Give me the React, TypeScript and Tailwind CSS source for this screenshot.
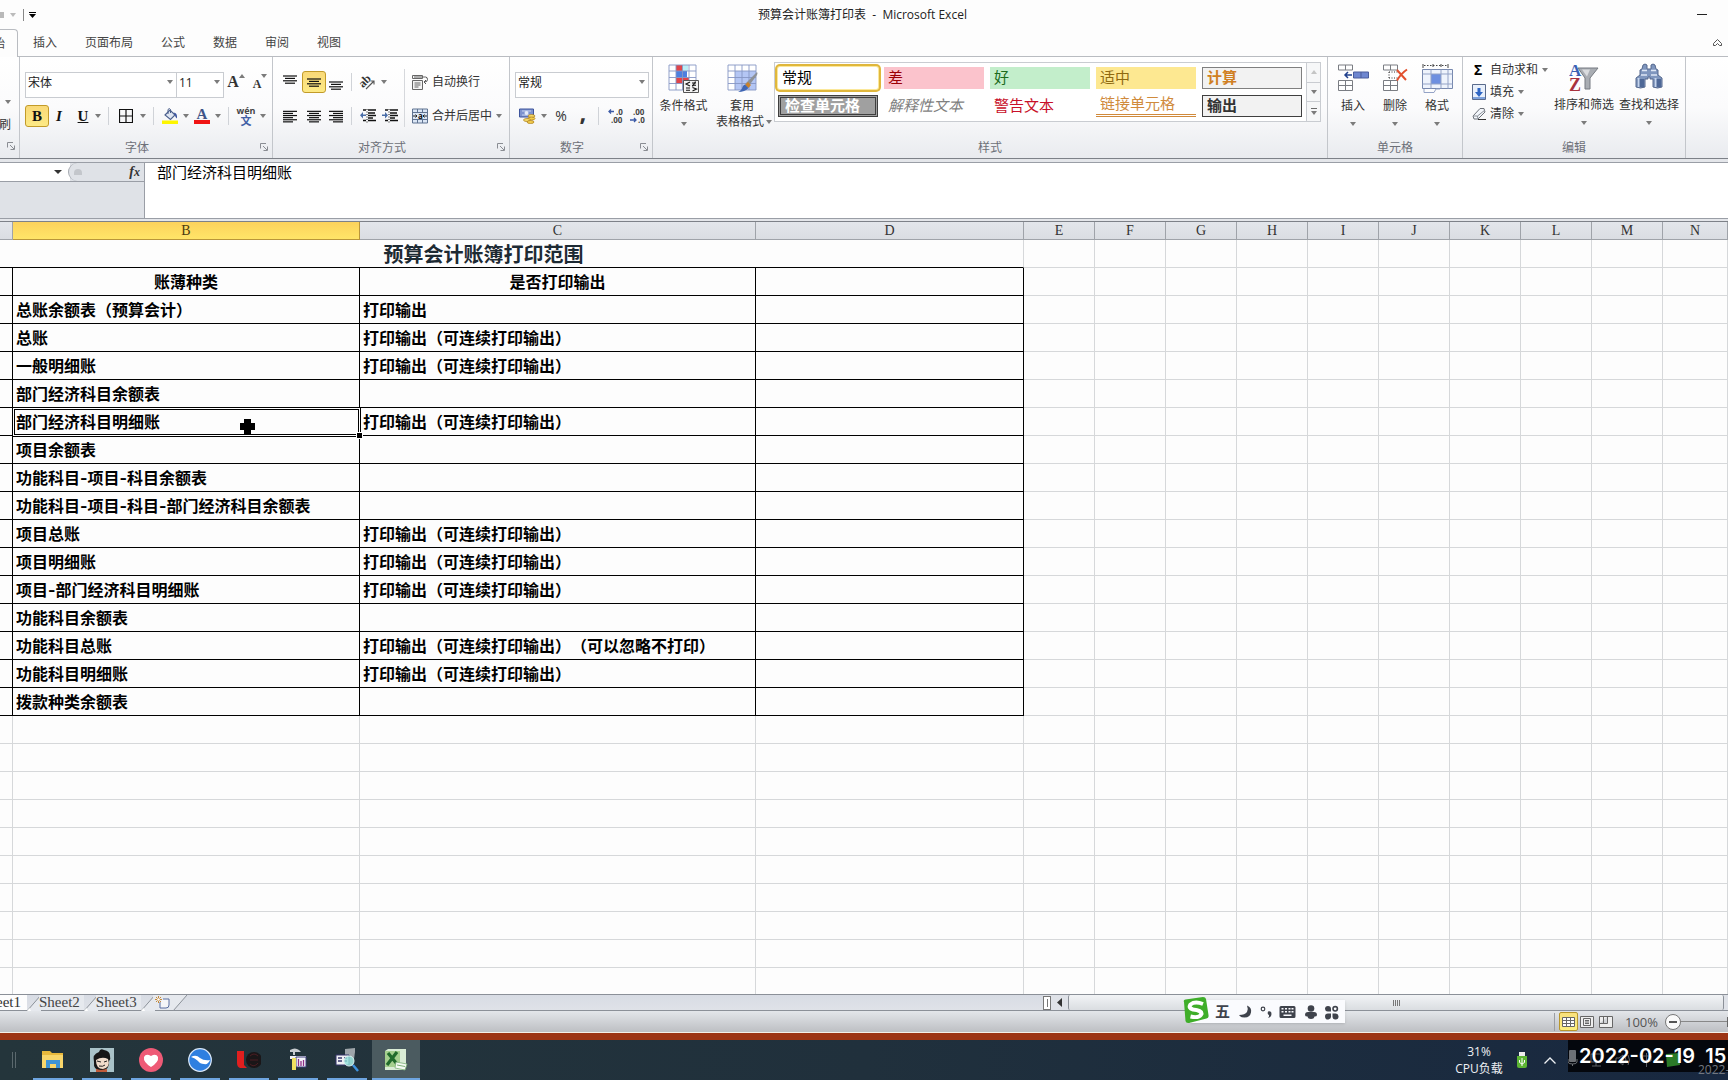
import type { ReactNode } from "react";
import clsx from "clsx";

const TABS = ["插入", "页面布局", "公式", "数据", "审阅", "视图"];

const COLUMNS = ["E", "F", "G", "H", "I", "J", "K", "L", "M", "N"];

const PRINT = "打印输出（可连续打印输出）";

const ROWS: [string, string][] = [
  ["总账余额表（预算会计）", "打印输出"],
  ["总账", PRINT],
  ["一般明细账", PRINT],
  ["部门经济科目余额表", ""],
  ["部门经济科目明细账", PRINT],
  ["项目余额表", ""],
  ["功能科目-项目-科目余额表", ""],
  ["功能科目-项目-科目-部门经济科目余额表", ""],
  ["项目总账", PRINT],
  ["项目明细账", PRINT],
  ["项目-部门经济科目明细账", PRINT],
  ["功能科目余额表", ""],
  ["功能科目总账", "打印输出（可连续打印输出）（可以忽略不打印）"],
  ["功能科目明细账", PRINT],
  ["拨款种类余额表", ""],
];

const SELECTED_ROW = 4;
const EMPTY_ROWS = 12;

const STYLES = [
  {
    name: "常规",
    cls: "bg-white text-black rounded-xs shadow-[0_0_0_1px_#fbe89a,0_0_0_3px_#e0b73c]",
  },
  { name: "差", cls: "bg-[#fbc3cc] text-[#9c0006]" },
  { name: "好", cls: "bg-[#c3eecb] text-[#1c6b1c]" },
  { name: "适中", cls: "bg-[#fde891] text-[#8f6a10]" },
  {
    name: "计算",
    cls: "bg-[#f2f2f2] text-[#d07f22] font-bold border border-[#7f7f7f]",
  },
  {
    name: "检查单元格",
    cls: "bg-[#a0a0a0] text-white font-bold border-3 border-double border-[#3f3f3f]",
  },
  { name: "解释性文本", cls: "text-[#7f7f7f] italic" },
  { name: "警告文本", cls: "text-[#c8102a]" },
  {
    name: "链接单元格",
    cls: "text-[#d08a3c] border-b-3 border-double border-[#d08a3c]",
  },
  {
    name: "输出",
    cls: "bg-[#f2f2f2] text-[#333] font-bold border border-[#3f3f3f]",
  },
];

const Caret = ({ className }: { className?: string }) => (
  <svg
    viewBox="0 0 6 4"
    className={clsx("w-1.5 h-1 shrink-0 fill-[#7b7b7b]", className)}
  >
    <path d="M0 0h6L3 4z" />
  </svg>
);

const Drop = ({ label }: { label: string }) => (
  <button
    aria-label={label}
    className="w-2.5 h-full flex items-center justify-center shrink-0"
  >
    <Caret />
  </button>
);

const Sep = () => <span className="w-px h-[18px] mx-[5px] bg-[#d0d3d8]" />;

const Tool = ({
  label,
  className,
  active,
  children,
}: {
  label: string;
  className?: string;
  active?: boolean;
  children: ReactNode;
}) => (
  <button
    aria-label={label}
    className={clsx(
      "h-[22px] flex items-center justify-center shrink-0",
      active &&
        "rounded-[3px] border border-[#c29b29] bg-linear-to-b from-[#f9d978] to-[#fdea85]",
      className,
    )}
  >
    {children}
  </button>
);

const Combo = ({
  label,
  value,
  className,
}: {
  label: string;
  value: string;
  className?: string;
}) => (
  <div className={clsx("relative h-[26px] shrink-0", className)}>
    <select
      aria-label={label}
      defaultValue={value}
      className="appearance-none w-full h-full border border-[#c9ccd1] bg-white pl-0.5 pb-1 text-xs text-[#222]"
    >
      <option>{value}</option>
    </select>
    <Caret className="absolute right-1 top-[11px] pointer-events-none" />
  </div>
);

const Group = ({
  title,
  className,
  launcher,
  children,
}: {
  title: string;
  className: string;
  launcher?: boolean;
  children: ReactNode;
}) => (
  <section
    className={clsx(
      "flex flex-col shrink-0 border-r border-[#c3c6cb]",
      className,
    )}
  >
    <div className="flex-1">{children}</div>
    <div
      className={clsx(
        "relative h-[21px] flex items-center justify-center text-xs text-[#6d7078]",
        launcher && "pr-[18px]",
      )}
    >
      {title}
      {launcher && (
        <button aria-label="更多" className="absolute right-1 top-1.5">
          <svg
            viewBox="0 0 8 8"
            className="w-2 h-2 fill-none stroke-[#8a8d93]"
            strokeWidth="1"
          >
            <path d="M.5 5.500V.5H6M3 3l4 4M7.500 3.500v4h-4" />
          </svg>
        </button>
      )}
    </div>
  </section>
);

// Paragraph lines of alternating length, used by every alignment icon
const Lines = ({
  count,
  pitch,
  align,
  className,
}: {
  count: number;
  pitch: number;
  align: "start" | "middle" | "end";
  className?: string;
}) => (
  <svg
    viewBox="0 0 14 13"
    className={clsx("w-3.5 h-[13px] fill-[#111]", className)}
  >
    {Array.from({ length: count }, (_, i) => {
      const w = i % 2 ? 10 : 14;
      const x = align === "start" ? 0 : align === "end" ? 14 - w : (14 - w) / 2;
      return (
        <rect
          key={i}
          x={x}
          y={(13 - (count - 1) * pitch - 1) / 2 + i * pitch}
          width={w}
          height="1.200"
        />
      );
    })}
  </svg>
);

const IndentIcon = ({ flip }: { flip?: boolean }) => (
  <svg viewBox="0 0 16 14" className="w-4 h-3.5">
    <path
      d="M3 1h3M8 1h8M8 4h7M8 6.500h8M8 9h5M3 11.500h3M8 11.500h8"
      stroke="#111"
      strokeWidth="1.500"
    />
    <path d="M7 0v14" stroke="#111" strokeDasharray="1 1.500" />
    <path
      d={flip ? "M0 5.500h3V3l3 3.300-3 3.300V7H0z" : "M6 5.500H3V3L0 6.300l3 3.300V7h3z"}
      fill="#4a6ea8"
    />
  </svg>
);

const BorderIcon = () => (
  <svg viewBox="0 0 14 14" className="w-3.5 h-3.5">
    <path
      d="M.5 .5h13v13H.5zM7 .5v13M.5 7h13"
      fill="none"
      stroke="#111"
      strokeWidth="1.200"
    />
  </svg>
);

const FillIcon = () => (
  <svg viewBox="0 0 16 16" className="w-4 h-4">
    <path
      d="M3 7l5-5 5 5-4.500 4.500z"
      fill="#dfe6f2"
      stroke="#4a5f8c"
      strokeWidth="1.100"
    />
    <path d="M6 6V1.500Q7.500-.5 8.500 1.500V5" fill="none" stroke="#4a5f8c" />
    <path d="M11.500 4.500q4 0 3.500 6-2-1-2-3.500z" fill="#3a52a0" />
    <rect y="12.500" width="16" height="3.500" fill="#fdf500" />
  </svg>
);

const OrientIcon = () => (
  <svg viewBox="0 0 18 16" className="w-[18px] h-4">
    <text
      x="0"
      y="11"
      fontSize="12"
      fontWeight="700"
      fontFamily="Liberation Serif, serif"
      fill="#333"
      transform="rotate(-45 6 8)"
    >
      ab
    </text>
    <path
      d="M7 15l8-8M11.500 7H15v3.500"
      fill="none"
      stroke="#555"
      strokeWidth="1.100"
    />
  </svg>
);

const WrapIcon = () => (
  <svg viewBox="0 0 16 16" className="w-4 h-4 fill-none stroke-[#666]">
    <path d="M.5 1.500h10v3H.5zM.5 6.500h10v9H.5z" fill="#f4f4f4" />
    <path d="M2 3h11.500M2.500 9h6M2.500 11h6M2.500 13h4" />
    <path d="M13.500 3q2 0 2 2.500T12.500 8M14 6l-2 2 2 2" stroke="#555" />
  </svg>
);

const MergeIcon = () => (
  <svg viewBox="0 0 16 16" className="w-4 h-4">
    <path
      d="M.5 1h15v14H.5zM.5 4.500h15M.5 11.500h15M5.500 1v3.500M10.500 1v3.500M5.500 11.500V15M10.500 11.500V15"
      fill="#dbe6f5"
      stroke="#5f7391"
    />
    <path d="M1 8h4M3.500 6.500L5 8 3.500 9.500M15 8h-4M12.500 6.500L11 8l1.500 1.500" fill="none" stroke="#222" />
    <text x="6" y="10.500" fontSize="8" fontWeight="700" fill="#111">
      a
    </text>
  </svg>
);

const MoneyIcon = () => (
  <svg viewBox="0 0 17 16" className="w-[17px] h-4">
    <path d="M.5 1h14v8H.5z" fill="#7d92cf" stroke="#3e549c" />
    <path d="M3 3h9M3 7h9" stroke="#c9d4f1" />
    <circle cx="7.500" cy="5" r="2" fill="#e6ecfa" />
    <ellipse cx="12.500" cy="8" rx="3.500" ry="1.500" fill="#f7dc6a" stroke="#a7791a" strokeWidth=".7" />
    <ellipse cx="12.500" cy="10.500" rx="3.500" ry="1.500" fill="#f3cd4c" stroke="#a7791a" strokeWidth=".7" />
    <ellipse cx="8" cy="12" rx="3.500" ry="1.500" fill="#f7dc6a" stroke="#a7791a" strokeWidth=".7" />
    <ellipse cx="11.500" cy="14" rx="3.500" ry="1.500" fill="#f3cd4c" stroke="#a7791a" strokeWidth=".7" />
  </svg>
);

const DecimalIcon = ({ less }: { less?: boolean }) => (
  <svg viewBox="0 0 16 16" className="w-4 h-4" fontSize="8" fontWeight="700">
    <text x={less ? 3 : 8} y="7" fill="#444">
      {less ? ".00" : ".0"}
    </text>
    <text x={less ? 8 : 3} y="15" fill="#444">
      {less ? ".0" : ".00"}
    </text>
    <path
      d={less ? "M0 12h6M4 10l2 2-2 2" : "M6 3.500H1M3 1.500l-2 2 2 2"}
      fill="none"
      stroke="#3c5aa6"
      strokeWidth="1.300"
    />
  </svg>
);

const CondIcon = () => (
  <svg viewBox="0 0 31 29" className="w-[31px] h-[29px]">
    <rect x="1" y="1" width="27" height="25" fill="#fff" />
    <path d="M8 1h6v6H8zM8 13.500h13v6H8z" fill="#e0454a" />
    <path d="M8 7h11v6.500H8z" fill="#4c7fe0" />
    <path d="M14 1h6v6h-6z" fill="#bdeef5" />
    <path
      d="M1 1h27v25H1zM1 7h27M1 13.500h27M1 19.500h27M8 1v25M14.500 1v25M21 1v25"
      fill="none"
      stroke="#8796c4"
      strokeWidth=".9"
    />
    <path d="M15.500 16.500h15v12h-15z" fill="#f4f4f4" stroke="#555" />
    <path
      d="M22 18l-4 2 4 2M18 24h4M18 26.200h4M24 19h4M24 21.200h4M27.500 17.500l-3 5M24.500 23.500l4 1.500-4 2"
      fill="none"
      stroke="#111"
      strokeWidth="1.100"
    />
  </svg>
);

const TableFmtIcon = () => (
  <svg viewBox="0 0 31 29" className="w-[31px] h-[29px]">
    <rect x="1" y="1" width="28" height="25" fill="#fff" />
    <path d="M8 7h21v19H8z" fill="#b4c6f4" />
    <path
      d="M1 1h28v25H1zM1 7h28M1 13.500h28M1 19.500h28M8 1v25M15 1v25M22 1v25"
      fill="none"
      stroke="#8796c4"
      strokeWidth=".9"
    />
    <path d="M30 8q1 1 0 3l-9 12-3-3L28 10z" fill="#8d9197" />
    <path d="M21 18l3 3-2.500 3-3.500-3z" fill="#c9822c" />
    <path d="M18 20.500l3.500 3.500Q18 28 11 28q4-2 4.500-5 .5-2 2.500-2.500z" fill="#3f66b4" />
  </svg>
);

const InsertIcon = () => (
  <svg viewBox="0 0 31 27" className="w-[31px] h-[27px]">
    <path
      d="M.5 1h14v5H.5zM7.500 1v5M.5 16.500h14v10H.5zM7.500 16.500v10M.5 21.500h14"
      fill="#fff"
      stroke="#7a7d83"
    />
    <path d="M15.500 8h15v6h-15z" fill="#6e86d0" stroke="#4a5c9c" />
    <path d="M23 8v6" stroke="#4a5c9c" />
    <path d="M14 11H7M10 8l-3 3 3 3" fill="none" stroke="#1f3f8c" strokeWidth="1.500" />
  </svg>
);

const DeleteIcon = () => (
  <svg viewBox="0 0 25 27" className="w-[25px] h-[27px]">
    <path
      d="M.5 1h14v5H.5zM7.500 1v5M.5 16.500h14v10H.5zM7.500 16.500v10M.5 21.500h14"
      fill="#fff"
      stroke="#7a7d83"
    />
    <path d="M6 8h9M6 14h9M6 8v6" fill="none" stroke="#333" strokeDasharray="1 1.500" />
    <path d="M14 6l9 10M24 5.500q-6 4-10 11" fill="none" stroke="#e2502e" strokeWidth="2" />
  </svg>
);

const FormatIcon = () => (
  <svg viewBox="0 0 31 30" className="w-[31px] h-[30px]">
    <path d="M1 0v4M26 0v4M11 0v3M19 0v3" stroke="#444" />
    <path d="M2 1.500h24" stroke="#444" strokeDasharray="1.500 1.500" />
    <path d="M.5 5.500h30v19H.5z" fill="#eef3fc" stroke="#7788ae" />
    <path d="M9 10h10v10H9z" fill="#6d8fe0" />
    <path
      d="M.5 10h30M.5 20h30M9 5.500v19M19 5.500v19M26 5.500v19M2 25v3.500h10l2-3.500h4"
      fill="none"
      stroke="#94a3c6"
    />
  </svg>
);

const SortIcon = () => (
  <svg viewBox="0 0 30 30" className="w-[30px] h-[30px]">
    <path d="M9 5h20l-8 10v11h-5V15z" fill="#a9adb3" stroke="#777b82" />
    <path d="M13 6.500h8l-3 7z" fill="#d9dbde" />
    <text x="0" y="13" fontSize="17" fontWeight="700" fontFamily="Liberation Serif, serif" fill="#3b62b5">
      A
    </text>
    <text x="0" y="28" fontSize="18" fontWeight="700" fontFamily="Liberation Serif, serif" fill="#a8323e">
      Z
    </text>
  </svg>
);

const FindIcon = () => (
  <svg viewBox="0 0 28 27" className="w-7 h-[27px]">
    <path
      d="M8 2q2-2 4 0v4h4V2q2-2 4 0l1 4 2 1v5l4 3v9q-4.500 2-9 0v-8h-3v-2h-2v2h-3v8q-4.500 2-9 0v-9l4-3V7l2-1z"
      fill="#7f96be"
      stroke="#56698e"
    />
    <path d="M2 16h7v8H2zM19 16h7v8h-7z" fill="#4e6897" />
    <path d="M3.500 15v9M20.500 15v9" stroke="#c6d5ee" strokeWidth="2" />
    <path d="M7 7.500h5M16 7.500h5M6 12h6M16 12h6" stroke="#dfe8f6" strokeWidth="1.500" />
  </svg>
);

const FillDownIcon = () => (
  <svg viewBox="0 0 14 16" className="w-3.5 h-4">
    <path d="M.5 .5h13v15H.5z" fill="#e9f0fb" stroke="#5a6b8c" />
    <path d="M1 13h12v2H1z" fill="#7ea2dc" />
    <path d="M5.500 4h3v4H11l-4 5-4-5h2.500z" fill="#2f66c4" />
  </svg>
);

const EraserIcon = () => (
  <svg viewBox="0 0 14 14" className="w-3.5 h-3.5">
    <path d="M1 9l7-7.500h4L13 5l-7 7H2z" fill="#f3f6fb" stroke="#6b7078" />
    <path d="M1 9h4.500L13 3M5.500 9L6 12" fill="none" stroke="#8a9098" />
    <path d="M6 12.500h8" stroke="#333" />
  </svg>
);

const BigTool = ({
  icon,
  label,
  className,
}: {
  icon: ReactNode;
  label: string;
  className?: string;
}) => (
  <button
    className={clsx(
      "flex flex-col items-center shrink-0 text-xs leading-4 text-[#333]",
      className,
    )}
  >
    <span className="h-[30px] flex items-start mb-1">{icon}</span>
    {label}
    <Caret className="mt-2" />
  </button>
);

const EditTool = ({ icon, label }: { icon: ReactNode; label: string }) => (
  <button className="h-[22px] flex items-center text-xs text-[#333]">
    <span className="w-[18px] flex">{icon}</span>
    {label}
    <Caret className="ml-1" />
  </button>
);

const Ribbon = () => (
  <div className="flex h-[102px] border-b border-[#7d8188] bg-linear-to-b from-white via-[#fbfbfc] to-[#e9ebef] overflow-hidden">
    <section className="w-5 shrink-0 border-r border-[#c3c6cb] flex flex-col justify-end items-end pr-1 gap-[9px] pb-2 overflow-hidden">
      <Caret className="mr-1 mb-1" />
      <span className="text-xs leading-4 whitespace-nowrap text-[#333] mr-1">
        格式刷
      </span>
      <svg viewBox="0 0 8 8" className="w-2 h-2 fill-none stroke-[#8a8d93]">
        <path d="M.5 5.500V.5H6M3 3l4 4M7.500 3.500v4h-4" />
      </svg>
    </section>

    <Group title="字体" launcher className="w-[253px]">
      <div className="flex flex-col gap-2.5 pt-3 pl-[5px]">
        <div className="flex items-center h-[26px]">
          <Combo label="字体" value="宋体" className="w-[152px]" />
          <Combo label="字号" value="11" className="w-12 -ml-px" />
          <Tool label="增大字号" className="w-6">
            <span className="font-['Liberation_Serif',serif] font-bold text-base text-[#333]">
              A
            </span>
            <Caret className="mb-3 rotate-180" />
          </Tool>
          <Tool label="减小字号" className="w-6">
            <span className="font-['Liberation_Serif',serif] font-bold text-xs pt-1 text-[#333]">
              A
            </span>
            <Caret className="mb-3" />
          </Tool>
        </div>
        <div className="flex items-center h-[22px] font-['Liberation_Serif',serif] text-[15px] text-[#111]">
          <Tool label="加粗" active className="w-6 font-bold">
            B
          </Tool>
          <Tool label="倾斜" className="w-5 italic font-bold">
            I
          </Tool>
          <Tool label="下划线" className="w-5 ml-1 underline font-bold">
            U
          </Tool>
          <Drop label="下划线选项" />
          <Sep />
          <Tool label="边框" className="w-6">
            <BorderIcon />
          </Tool>
          <Drop label="边框选项" />
          <Sep />
          <Tool label="填充颜色" className="w-[22px]">
            <FillIcon />
          </Tool>
          <Drop label="填充颜色选项" />
          <Tool label="字体颜色" className="w-[22px]">
            <span className="w-4 h-4 flex items-center justify-center border-b-4 border-[#f01414] text-[#3f5488] font-bold leading-none">
              A
            </span>
          </Tool>
          <Drop label="字体颜色选项" />
          <Sep />
          <Tool label="拼音" className="w-6">
            <span className="flex flex-col items-center font-['Open_Sans','Noto_Sans_CJK_SC',sans-serif]">
              <span className="text-[9px] leading-[8px] font-bold text-[#444]">
                wén
              </span>
              <span className="text-[11px] leading-[11px] font-bold text-[#4160a5]">
                文
              </span>
            </span>
          </Tool>
          <Drop label="拼音选项" />
        </div>
      </div>
    </Group>

    <Group title="对齐方式" launcher className="w-[237px]">
      <div className="flex pt-3 pl-[5px]">
        <div className="flex flex-col gap-2.5 w-[127px] border-r border-[#d6d8dc]">
          <div className="flex items-center h-[26px]">
            <Tool label="顶端对齐" className="w-6">
              <Lines count={4} pitch={2.4} align="middle" className="mb-1.5" />
            </Tool>
            <Tool label="垂直居中" active className="w-6">
              <Lines count={4} pitch={2.4} align="middle" />
            </Tool>
            <Tool label="底端对齐" className="w-5">
              <Lines count={4} pitch={2.4} align="middle" className="mt-1.5" />
            </Tool>
            <Sep />
            <Tool label="方向" className="w-[22px]">
              <OrientIcon />
            </Tool>
            <Drop label="方向选项" />
          </div>
          <div className="flex items-center h-[22px]">
            <Tool label="文本左对齐" className="w-6">
              <Lines count={6} pitch={2.1} align="start" />
            </Tool>
            <Tool label="居中" className="w-6">
              <Lines count={6} pitch={2.1} align="middle" />
            </Tool>
            <Tool label="文本右对齐" className="w-5">
              <Lines count={6} pitch={2.1} align="end" />
            </Tool>
            <Sep />
            <Tool label="减少缩进量" className="w-[22px]">
              <IndentIcon />
            </Tool>
            <Tool label="增加缩进量" className="w-[22px]">
              <IndentIcon flip />
            </Tool>
          </div>
        </div>
        <div className="flex flex-col gap-2.5 pl-[7px] text-xs text-[#333]">
          <button className="flex items-center gap-1 h-[26px]">
            <WrapIcon />
            自动换行
          </button>
          <button className="flex items-center gap-1 h-[22px]">
            <MergeIcon />
            合并后居中
            <Caret />
          </button>
        </div>
      </div>
    </Group>

    <Group title="数字" launcher className="w-[143px]">
      <div className="flex flex-col gap-2.5 pt-3 pl-[5px]">
        <Combo label="数字格式" value="常规" className="w-[134px]" />
        <div className="flex items-center h-[22px] text-[#333]">
          <Tool label="会计数字格式" className="w-6">
            <MoneyIcon />
          </Tool>
          <Drop label="会计数字格式选项" />
          <Tool label="百分比样式" className="w-6 text-sm">
            %
          </Tool>
          <Tool label="千位分隔样式" className="w-5 pb-2 text-2xl leading-none font-bold">
            ,
          </Tool>
          <Sep />
          <Tool label="增加小数位数" className="w-6">
            <DecimalIcon />
          </Tool>
          <Tool label="减少小数位数" className="w-5">
            <DecimalIcon less />
          </Tool>
        </div>
      </div>
    </Group>

    <Group title="样式" className="w-[675px]">
      <div className="flex items-start pt-[5px]">
        <BigTool icon={<CondIcon />} label="条件格式" className="w-[60px] pt-0.5 pl-px" />
        <button className="w-[58px] pt-0.5 shrink-0 flex flex-col items-center text-xs leading-4 text-[#333]">
          <span className="h-[30px] mb-1">
            <TableFmtIcon />
          </span>
          套用
          <span className="flex items-center whitespace-nowrap pl-1">
            表格格式
            <Caret className="ml-0.5" />
          </span>
        </button>
        <div className="flex-1 h-[60px] mr-1.5 ml-[3px] flex border border-[#c9ccd1] bg-white">
          <div className="flex-1 grid grid-cols-5 content-start gap-1.5 p-1 pl-[3px]">
            {STYLES.map((s) => (
              <button
                key={s.name}
                className={clsx(
                  "h-[22px] pl-1 pb-0.5 flex items-center text-left text-[15px] leading-none whitespace-nowrap",
                  s.cls,
                )}
              >
                {s.name}
              </button>
            ))}
          </div>
          <div className="w-3.5 flex flex-col border-l border-[#c9ccd1] bg-[#f6f7f8]">
            <button aria-label="上一行" className="flex-1 flex items-center justify-center">
              <Caret className="rotate-180 opacity-40" />
            </button>
            <button aria-label="下一行" className="flex-1 flex items-center justify-center border-y border-[#c9ccd1]">
              <Caret />
            </button>
            <button aria-label="其他" className="flex-1 flex flex-col gap-0.5 items-center justify-center">
              <span className="w-1.5 h-px bg-[#6b6b6b]" />
              <Caret />
            </button>
          </div>
        </div>
      </div>
    </Group>

    <Group title="单元格" className="w-[135px]">
      <div className="flex pt-[7px] pl-1">
        <BigTool icon={<InsertIcon />} label="插入" className="w-[42px]" />
        <BigTool icon={<DeleteIcon />} label="删除" className="w-[42px]" />
        <BigTool icon={<FormatIcon />} label="格式" className="w-[42px]" />
      </div>
    </Group>

    <Group title="编辑" className="w-[223px]">
      <div className="flex">
        <div className="flex flex-col w-[88px] pl-[9px] pt-0.5">
          <EditTool
            icon={<span className="pl-0.5 text-sm font-bold leading-none text-black">Σ</span>}
            label="自动求和"
          />
          <EditTool icon={<FillDownIcon />} label="填充" />
          <EditTool icon={<EraserIcon />} label="清除" />
        </div>
        <BigTool icon={<SortIcon />} label="排序和筛选" className="w-[66px] pt-[6px]" />
        <BigTool icon={<FindIcon />} label="查找和选择" className="w-[64px] pt-[6px]" />
      </div>
    </Group>
  </div>
);

const FormulaBar = () => (
  <div className="mt-[3px] flex h-[57px] border-y border-[#9a9ea6] bg-white">
    <div className="w-[145px] shrink-0 border-r border-[#9a9ea6] bg-[#dfe2e7]">
      <div className="h-[19px] flex items-center border-b border-[#9a9ea6]">
        <div className="w-[70px] h-full flex items-center justify-end bg-white pr-2">
          <svg viewBox="0 0 8 4" className="w-2 h-1 fill-[#333]">
            <path d="M0 0h8L4 4z" />
          </svg>
        </div>
        <span className="w-[18px] h-[18px] -ml-0.5 flex items-center justify-center rounded-full border-l border-[#a5a9b0] bg-[#dfe2e7]">
          <span className="w-2 h-1.5 rounded-t-full bg-[#c3c6cb]" />
        </span>
        <button
          aria-label="插入函数"
          className="ml-auto mr-1 font-['Liberation_Serif',serif] italic font-bold text-sm leading-none text-[#333]"
        >
          f<span className="text-xs">x</span>
        </button>
      </div>
    </div>
    <textarea
      aria-label="编辑栏"
      defaultValue="部门经济科目明细账"
      className="flex-1 resize-none outline-none pl-3 text-[15px] leading-[19px] text-black"
    />
  </div>
);

const GRID = "border-r border-b border-[#d6d8da]";
const BOXED = "border-r border-b border-black";
const HEAD =
  "h-[18px] p-0 border-r border-b border-[#9fa3a9] font-normal text-sm leading-4 text-[#333] bg-linear-to-b from-[#e3e6eb] to-[#dadde2]";

const Selection = () => (
  <>
    <span className="absolute -left-px -top-px -bottom-0.5 -right-0.5 z-10 border border-black shadow-[inset_0_0_0_1px_white,inset_0_0_0_2px_black]" />
    <span className="absolute -right-[3px] -bottom-[3px] z-10 w-[5px] h-[5px] bg-black outline outline-white" />
    <svg viewBox="0 0 15 15" className="absolute left-[227px] top-[11px] z-20 w-[15px] h-[15px]">
      <path d="M4 0h7v4h4v7h-4v4H4v-4H0V4h4z" fill="#000" />
    </svg>
  </>
);

const Sheet = () => (
  <main className="flex-1 min-h-0 overflow-hidden mt-[2px] border-t border-[#7d8188] bg-[#fdfdfd]">
    <table className="w-full table-fixed border-separate border-spacing-0 font-['Inter','Noto_Sans_CJK_SC',sans-serif] [text-spacing-trim:space-all]">
      <colgroup>
        <col className="w-[13px]" />
        <col className="w-[347px]" />
        <col className="w-[396px]" />
        <col className="w-[268px]" />
        {COLUMNS.map((c) => (
          <col key={c} className={c === "N" ? "" : "w-[71px]"} />
        ))}
      </colgroup>
      <thead className="font-['Liberation_Serif',serif]">
        <tr>
          <th aria-label="A" className={HEAD} />
          <th className="h-[18px] p-0 border-r border-b border-[#b9953a] bg-linear-to-b from-[#fcd25c] to-[#ffe568] font-normal text-sm leading-4 text-[#4a3a10]">
            B
          </th>
          {["C", "D", ...COLUMNS].map((c) => (
            <th key={c} className={HEAD}>
              {c}
            </th>
          ))}
        </tr>
      </thead>
      <tbody className="text-base leading-[25px] font-bold text-black whitespace-nowrap">
        <tr className="h-7">
          <td
            colSpan={4}
            className="p-0 pt-1 pr-14 border-b border-b-black border-r border-r-[#d6d8da] text-center text-xl leading-[23px] text-[#1d2a33]"
          >
            预算会计账簿打印范围
          </td>
          {COLUMNS.map((c) => (
            <td key={c} className={GRID} />
          ))}
        </tr>
        <tr className="h-7">
          <td className={BOXED} />
          <td className={clsx(BOXED, "p-0 pt-0.5 text-center")}>账薄种类</td>
          <td className={clsx(BOXED, "p-0 pt-0.5 text-center")}>是否打印输出</td>
          <td className={BOXED} />
          {COLUMNS.map((c) => (
            <td key={c} className={GRID} />
          ))}
        </tr>
        {ROWS.map(([name, output], i) => (
          <tr key={name} className="h-7">
            <td className={BOXED} />
            <td className={clsx(BOXED, "relative p-0 pt-0.5 pl-[3px]")}>
              {name}
              {i === SELECTED_ROW && <Selection />}
            </td>
            <td className={clsx(BOXED, "p-0 pt-0.5 pl-[3px]")}>{output}</td>
            <td className={BOXED} />
            {COLUMNS.map((c) => (
              <td key={c} className={GRID} />
            ))}
          </tr>
        ))}
        {Array.from({ length: EMPTY_ROWS }, (_, i) => (
          <tr key={i} className="h-7">
            {["A", "B", "C", "D", ...COLUMNS].map((c) => (
              <td key={c} className={GRID} />
            ))}
          </tr>
        ))}
      </tbody>
    </table>
  </main>
);

const Slant = () => (
  <svg viewBox="0 0 14 16" className="w-3.5 h-4 shrink-0 -mr-0.5">
    <path d="M0 16L14 0v16z" fill="#e6e9ee" />
    <path d="M0 16L14 0" stroke="#8b9098" />
    <path d="M0 16h4L2.500 13z" fill="#fff" />
  </svg>
);

const SheetTabs = () => (
  <div className="flex h-[17px] border-y border-[#8b9098] bg-linear-to-b from-[#d8dce4] to-[#dfe2e8]">
    <nav className="flex-1 flex font-['Liberation_Serif',serif] text-[15px] leading-[15px] text-[#444]">
      <button className="w-[27px] flex justify-end pr-1.5 overflow-hidden bg-[#fdfdfd] text-[#333]">
        Sheet1
      </button>
      <Slant />
      <button className="pr-1 bg-[#e6e9ee]">Sheet2</button>
      <Slant />
      <button className="pr-1 bg-[#e6e9ee]">Sheet3</button>
      <Slant />
      <button aria-label="插入工作表" className="px-0.5 bg-[#e6e9ee]">
        <svg viewBox="0 0 16 14" className="w-4 h-3.5 fill-none">
          <path d="M5 6v6h6q3 0 3-3V3H8" fill="#f5f6f8" stroke="#5a6fa0" />
          <path d="M3.500 0v7M0 3.500h7M1 1l5 5M6 1L1 6" stroke="#c58a3a" />
          <circle cx="3.500" cy="3.500" r="1.300" fill="#fff" />
        </svg>
      </button>
      <svg viewBox="0 0 14 16" className="w-3.5 h-4">
        <path d="M0 16V0h14z" fill="#e6e9ee" />
        <path d="M0 16L14 0" stroke="#8b9098" />
      </svg>
    </nav>
    <div className="w-[685px] shrink-0 flex items-center bg-[#dfe2e8]">
      <span className="w-2 h-3.5 flex items-center justify-center border border-[#777] bg-white">
        <span className="w-px h-2 bg-[#777]" />
      </span>
      <button aria-label="向左滚动" className="w-[17px] flex justify-center">
        <svg viewBox="0 0 5 9" className="w-[5px] h-[9px] fill-[#333]">
          <path d="M5 0v9L0 4.500z" />
        </svg>
      </button>
      <div className="flex-1 mr-1 h-full flex items-center justify-center border-x border-[#8b9098] rounded-xs bg-linear-to-b from-[#f2f4f6] to-[#dadde1]">
        <span className="flex gap-px">
          {[0, 1, 2, 3].map((n) => (
            <span key={n} className="w-px h-1.5 bg-[#777]" />
          ))}
        </span>
      </div>
    </div>
  </div>
);

const StatusBar = () => (
  <div className="flex h-[22px] items-center justify-end border-b border-[#f3efe8] bg-linear-to-b from-[#e3e6ea] to-[#bdbfc3]">
    <span className="w-px h-[18px] mr-1 bg-[#9a9da3]" />
    <button
      aria-label="普通"
      className="w-[19px] h-[19px] flex items-center justify-center rounded-xs border border-[#b8962c] bg-linear-to-b from-[#f9e17c] to-[#fbee7f]"
    >
      <svg viewBox="0 0 13 10" className="w-[13px] h-2.5 fill-white stroke-[#666]">
        <path d="M.5 .5h12v9H.5zM.5 3.500h12M.5 6.500h12M4.500 .5v9M8.500 .5v9" />
      </svg>
    </button>
    <button aria-label="页面布局视图" className="ml-0.5">
      <svg viewBox="0 0 14 12" className="w-3.5 h-3 fill-[#eee] stroke-[#666]">
        <path d="M.5 .5h13v11H.5zM3.500 2.500h7v7h-7zM5 4.500h4M5 6h4M5 7.500h4" />
      </svg>
    </button>
    <button aria-label="分页预览" className="ml-[5px]">
      <svg viewBox="0 0 14 12" className="w-3.5 h-3 fill-[#eee] stroke-[#666]">
        <path d="M.5 .5h13v11H.5zM.5 7.500h8v-7M4.500 .5v7" />
      </svg>
    </button>
    <span className="w-8 ml-3 text-[13px] leading-4 text-[#555]">100%</span>
    <button
      aria-label="缩小"
      className="ml-2 w-4 h-4 flex items-center justify-center rounded-full border border-[#777] bg-[#fafafa]"
    >
      <span className="w-2 h-0.5 bg-[#555]" />
    </button>
    <span className="w-[46px] h-px bg-[#888]" />
    <span className="w-px h-2.5 bg-[#666]" />
  </div>
);

const InputMethod = () => (
  <div className="absolute right-[383px] top-[6px] h-[23px] w-[155px] flex items-center bg-[#fafbfe] shadow-sm text-[#3f434c]">
    <svg viewBox="0 0 28 28" className="absolute -left-[9px] -top-[3px] w-7 h-7">
      <path d="M3 5Q2 3 4.500 2.500L22 0q2.500 0 3 2l2.500 16q.5 3-2 3.500L8 26q-3 .5-3.500-2z" fill="#3fae29" />
      <path
        d="M22 7Q14 4 9.500 7.500 7 11 12 12.500q9 1 8.500 4.500-2 4.500-11 2.500"
        fill="none"
        stroke="#fff"
        strokeWidth="4"
      />
    </svg>
    <span className="ml-[25px] w-[15px] text-[15px] leading-none font-bold">五</span>
    <svg viewBox="0 0 104 16" className="ml-2 w-[104px] h-4 fill-[#3f434c]">
      <path d="M9 1.500q5 2 4 7t-6.500 5q-4 0-5.500-2.500Q7 11 9 8q1.500-3 0-6.500z" />
      <circle cx="25" cy="5" r="1.800" fill="none" stroke="#3f434c" strokeWidth="1.200" />
      <path d="M30 7.500q3.500-1 3.500 2.500 0 3-3.500 4 1.500-1.500 1-3-2-1-1-3.500z" />
      <path
        fillRule="evenodd"
        d="M43 2h13q1.500 0 1.500 1.500v9q0 1.500-1.500 1.500H43q-1.500 0-1.500-1.500v-9Q41.500 2 43 2zm.5 2v1.500h2V4zm3.500 0v1.500h2V4zm3.500 0v1.500h2V4zm3 0v1.500h2V4zm-10 3v1.500h2V7zm3.500 0v1.500h2V7zm3.500 0v1.500h2V7zm3 0v1.500h2V7zM45.500 10.500V12h8v-1.500z"
      />
      <circle cx="73" cy="4.500" r="3.300" />
      <path d="M67 11q0-3 3-3h6q3 0 3 3 0 1.500-2.500 1.500Q76 15 73 15t-3.500-2.500Q67 12.500 67 11z" />
      <path d="M87 5a3 3 0 1 1 6 0v2.500h-2.500A3 3 0 0 1 87 5zM94.500 9.500H97a3 3 0 1 1-2.500 3zM93 9.500v2.500a3 3 0 1 1-3-2.500z" />
      <circle cx="97.200" cy="4.800" r="2.200" fill="none" stroke="#3f434c" strokeWidth="1.600" />
    </svg>
  </div>
);

const APPS: { name: string; icon: ReactNode }[] = [
  {
    name: "文件资源管理器",
    icon: (
      <>
        <path d="M1 3h8l2 2h11v15H1z" fill="#e9b93c" />
        <path d="M1 7h21v13H1z" fill="#f9d66a" />
        <path d="M5 20v-8h14v8h-4v-4H9v4z" fill="#3f94d6" />
      </>
    ),
  },
  {
    name: "聊天",
    icon: (
      <>
        <path d="M0 0h24v24H0z" fill="#a9c2c8" />
        <path d="M4 14Q2 6 9 4q1-4 5-2 6 1 6 6 1 3-1 5 1 9-8 10-8-1-7-9z" fill="#161616" />
        <path d="M6 12q6-4 12-1 3 8-5 10-7 0-7-9z" fill="#f0dccb" />
        <path d="M7 13l4 1M14 14l3-1M9 18q4 1 6-1" stroke="#222" fill="none" />
        <path d="M6 21l5 1 6-1v3H6z" fill="#c05a3a" />
      </>
    ),
  },
  {
    name: "健康",
    icon: (
      <>
        <circle cx="12" cy="12" r="12" fill="#ee5a76" />
        <path d="M12 19Q4 14 5 9q2-4 7-1 5-3 7 1 1 5-7 10z" fill="#fff" />
      </>
    ),
  },
  {
    name: "浏览器",
    icon: (
      <>
        <circle cx="12" cy="12" r="11.300" fill="#2e7fe0" stroke="#dbe9fa" strokeWidth="1.200" />
        <path d="M3 9q5-3 9 1 4 3 10 2-2 5-6 4-4 0-6-3-3-3-7-4z" fill="#fff" />
      </>
    ),
  },
  {
    name: "影音",
    icon: (
      <>
        <path d="M0 3h7v14l3 3H3q-3-1-3-5z" fill="#e01f1f" />
        <circle cx="17" cy="12" r="8" fill="#1a1618" />
        <path d="M13 8q4-4 8 0M13 16q4 4 8-1M13 12h8" stroke="#4a1d22" fill="none" />
      </>
    ),
  },
  {
    name: "工具",
    icon: (
      <>
        <path d="M4 2q5-3 9 0l2 2H9v3H7V4H4z" fill="#c8ccd0" />
        <path d="M4 8h16v3H4z" fill="#f0f0f4" />
        <path d="M10 9h10v10H10z" fill="#f4f4fa" stroke="#3d3d7c" />
        <path d="M12.500 11v7M15 13v5M17.500 12v6" stroke="#8d2f86" strokeWidth="1.300" />
        <path d="M6 10h4v12H6z" fill="#f0e060" />
      </>
    ),
  },
  {
    name: "数据库",
    icon: (
      <>
        <path d="M10 1l10-1v4l-2 14-8-2z" fill="#9ea5aa" />
        <path d="M1 7h13v10H1z" fill="#f0f0f4" stroke="#34346a" />
        <path d="M3 10h4M3 13h4M9 10h3M9 13h3" stroke="#34346a" strokeWidth="1.300" />
        <circle cx="14" cy="13" r="5" fill="#8fe0d8" fillOpacity=".8" stroke="#d9f2f0" />
        <path d="M18 17l5 6" stroke="#3d93e0" strokeWidth="2.500" />
      </>
    ),
  },
  {
    name: "Excel",
    icon: (
      <>
        <path d="M1 3l3-2h18v18l-3 3H1z" fill="#d9ecd5" />
        <path d="M1 3h15v16H1z" fill="#a5cf8e" />
        <path d="M4 5l9 11M13 4L3 17" stroke="#216b2b" strokeWidth="3.200" />
        <path d="M12 14l11 2-2 6-10-2z" fill="#f4faf2" stroke="#7db078" strokeWidth=".8" />
        <path d="M13 17l8 1.500" stroke="#7db078" />
      </>
    ),
  },
];

const Taskbar = () => (
  <footer className="relative flex h-10 bg-linear-to-r from-[#24353b] via-[#20303c] to-[#182840] overflow-hidden">
    <div className="w-7 flex items-center justify-center gap-0.5 shrink-0">
      <span className="w-px h-4 bg-[#5a686d]" />
      <span className="w-px h-4 bg-[#5a686d]" />
    </div>
    <div className="flex flex-1 gap-px">
      {APPS.map((app, i) => (
        <button
          key={app.name}
          aria-label={app.name}
          className={clsx(
            "w-12 flex flex-col items-center justify-between",
            i === 0 && "ml-px",
            i === APPS.length - 1 && "bg-[#4b5b60]",
          )}
        >
          <svg viewBox="0 0 24 24" className="w-6 h-6 mt-2">
            {app.icon}
          </svg>
          <span
            className={clsx(
              "h-0.5 bg-[#6ea5e0]",
              i === APPS.length - 1 ? "w-12" : "w-10",
            )}
          />
        </button>
      ))}
    </div>
    <div className="flex items-center shrink-0 text-[#eef1f4]">
      <div className="w-12 text-xs leading-[17px] text-center whitespace-nowrap">
        <div>31%</div>
        <div>CPU负载</div>
      </div>
      <svg viewBox="0 0 10 16" className="w-2.5 h-4 ml-3.5">
        <path d="M2 0h6v4H2z" fill="#eee" />
        <path d="M0 4h10v10q0 2-2 2H2q-2 0-2-2z" fill="#5cb534" />
        <path d="M5 6v8M2.500 8v2.500L5 12l2.500-1.500V8" stroke="#fff" fill="none" />
      </svg>
      <svg viewBox="0 0 12 7" className="w-3 h-[7px] ml-[17px] mr-3 fill-none stroke-[#eef1f4]">
        <path d="M.5 6.500L6 1l5.500 5.500" strokeWidth="1.300" />
      </svg>
      <div className="relative w-40 h-full overflow-hidden">
        <div className="h-8 bg-[#04070d] flex items-center">
          <svg viewBox="0 0 10 16" className="w-2.5 h-4 mt-1">
            <rect x="1" y="0" width="7" height="12" rx="1" fill="#6d7075" />
            <path d="M0 9v3q0 2 4.500 2T9 12V9M4.500 14v2" stroke="#6d7075" fill="none" />
          </svg>
          <svg viewBox="0 0 104 16" className="w-[104px] h-4 ml-3 mt-2 fill-none stroke-[#5c6065]">
            <path d="M1 2h10v8H1zM6 10v4M2 14h9M26 6v4h3l4 3V3l-4 3zM35 5q2 3 0 6M38 3q3 5 0 10M52 4h9v5h-9zM56.500 1v14" />
            <path d="M76 2l13-1 1 12-13 2z" fill="#2b7a28" stroke="none" />
          </svg>
        </div>
        <div className="absolute right-0 bottom-0.5 w-[30px] text-xs leading-4 whitespace-nowrap text-[#72777f]">
          2022-
        </div>
        <div className="absolute left-[11px] top-[3px] font-['Inter',sans-serif] font-semibold text-xl leading-[26px] whitespace-pre text-white">
          {"2022-02-19  15"}
        </div>
      </div>
    </div>
  </footer>
);

export default function App() {
  return (
    <div className="h-screen flex flex-col overflow-hidden bg-[#e4e6ea] font-['Open_Sans','Noto_Sans_CJK_SC',sans-serif]">
      <header className="bg-[#fdfdfd] border-b border-[#b9bcc1]">
        <div className="relative h-[29px] flex items-center justify-between text-xs text-[#222]">
          <div className="flex items-center">
            <span className="w-1 h-1.5 bg-[#b9b9b9]" />
            <Caret className="ml-1.5 opacity-50" />
            <span className="w-px h-3 ml-[7px] bg-[#888]" />
            <button aria-label="自定义快速访问工具栏" className="ml-[5px]">
              <svg viewBox="0 0 7 6" className="w-[7px] h-1.5">
                <path d="M0 0h7v1H0zM0 2h7L3.500 6z" />
              </svg>
            </button>
          </div>
          <h1 className="whitespace-pre mr-2">
            预算会计账簿打印表  -  Microsoft Excel
          </h1>
          <button aria-label="最小化" className="w-2.5 h-px mr-[21px] bg-[#222]" />
        </div>
        <div className="h-[27px] flex items-stretch text-xs text-[#444]">
          <button className="w-[18px] mr-px -mb-px flex items-center justify-end pr-3 overflow-hidden whitespace-nowrap border-t border-r border-[#b9bcc1] bg-[#fdfdfd] rounded-tr-sm">
            开始
          </button>
          {TABS.map((tab) => (
            <button key={tab} className="px-3.5">
              {tab}
            </button>
          ))}
          <button aria-label="功能区最小化" className="ml-auto mr-1.5">
            <svg viewBox="0 0 9 7" className="w-[9px] h-[7px] fill-none stroke-[#555]">
              <path d="M.5 4.500l4-4 4 4v2h-2l-2-2-2 2h-2z" />
            </svg>
          </button>
        </div>
      </header>
      <Ribbon />
      <FormulaBar />
      <Sheet />
      <div className="relative">
        <SheetTabs />
        <StatusBar />
        <InputMethod />
      </div>
      <div className="h-[7px] bg-[#9c3414]" />
      <Taskbar />
    </div>
  );
}
